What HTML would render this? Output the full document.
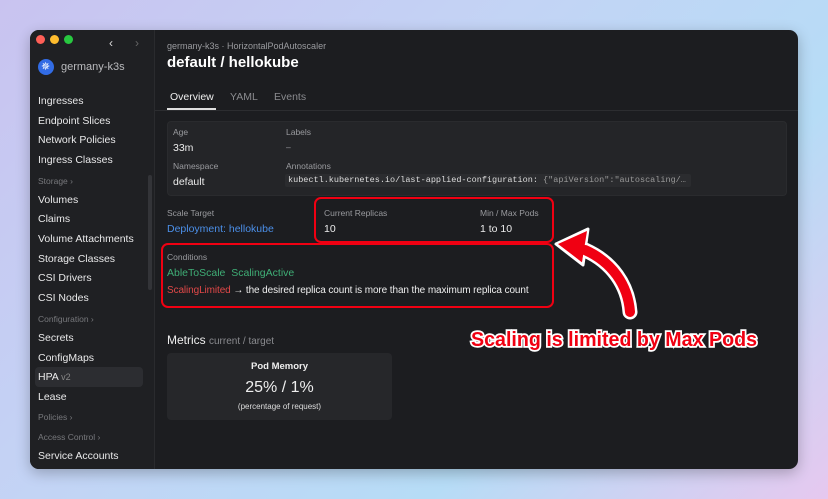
<!DOCTYPE html>
<html><head><meta charset="utf-8"><style>
*{margin:0;padding:0;box-sizing:border-box}
body{width:828px;height:499px;overflow:hidden;font-family:"Liberation Sans",sans-serif;position:relative;
background:linear-gradient(135deg,#c9c3f0 0%,#c3d4f5 40%,#b6dcf6 70%,#e6c8ef 100%);}
.win{position:absolute;left:30px;top:30px;width:768px;height:439px;background:#1c1d20;border-radius:9px;overflow:hidden;box-shadow:0 4px 14px rgba(0,0,0,.25)}
.side{position:absolute;left:0;top:0;width:125px;height:100%;background:#1f2023;border-right:1px solid #2a2b2e}
.dot{position:absolute;top:5px;width:9px;height:9px;border-radius:50%}
.si{position:absolute;left:8px;font-size:10.5px;color:#e9e9ea}
.sh{position:absolute;left:8px;font-size:8.5px;color:#77787c}
.t{position:absolute;white-space:nowrap}
.lab{font-size:8.5px;color:#9a9b9f}
.val{font-size:10.5px;color:#ececec}
.red{position:absolute;border:2.5px solid #f00012;border-radius:7px}
</style></head><body>
<div class="win">
 <div class="side">
  <div class="dot" style="left:6px;background:#fe5f57"></div>
  <div class="dot" style="left:20px;background:#febc2e"></div>
  <div class="dot" style="left:34px;background:#28c840"></div>
  <div class="t" style="left:79px;top:6px;color:#ddd;font-size:12px">‹</div>
  <div class="t" style="left:105px;top:6px;color:#666;font-size:12px">›</div>
  <div style="position:absolute;left:8px;top:29px;width:16px;height:16px;border-radius:50%;background:#326ce5"></div>
  <div class="t" style="left:11px;top:30px;color:#fff;font-size:11px">✵</div>
  <div class="t" style="left:31px;top:31px;color:#b9babd;font-size:11px">germany-k3s</div>
  <div class="si" style="top:65px">Ingresses</div>
  <div class="si" style="top:85px">Endpoint Slices</div>
  <div class="si" style="top:104px">Network Policies</div>
  <div class="si" style="top:124px">Ingress Classes</div>
  <div class="sh" style="top:146px">Storage ›</div>
  <div class="si" style="top:164px">Volumes</div>
  <div class="si" style="top:183px">Claims</div>
  <div class="si" style="top:203px">Volume Attachments</div>
  <div class="si" style="top:223px">Storage Classes</div>
  <div class="si" style="top:242px">CSI Drivers</div>
  <div class="si" style="top:262px">CSI Nodes</div>
  <div class="sh" style="top:284px">Configuration ›</div>
  <div class="si" style="top:302px">Secrets</div>
  <div class="si" style="top:322px">ConfigMaps</div>
  <div style="position:absolute;left:5px;top:337px;width:108px;height:20px;background:#2c2d31;border-radius:4px"></div>
  <div class="si" style="top:341px">HPA <span style="color:#888;font-size:9px">v2</span></div>
  <div class="si" style="top:361px">Lease</div>
  <div class="sh" style="top:382px">Policies ›</div>
  <div class="sh" style="top:402px">Access Control ›</div>
  <div class="si" style="top:420px">Service Accounts</div>
  <div style="position:absolute;left:118px;top:145px;width:4px;height:115px;background:#333438;border-radius:2px"></div>
 </div>
 <div class="t" style="left:137px;top:11px;font-size:9px;color:#9a9b9f">germany-k3s · HorizontalPodAutoscaler</div>
 <div class="t" style="left:137px;top:24px;font-size:15px;font-weight:bold;color:#fff">default / hellokube</div>
 <div class="t" style="left:140px;top:61px;font-size:10.5px;color:#eee">Overview</div>
 <div class="t" style="left:200px;top:61px;font-size:10.5px;color:#8a8b8f">YAML</div>
 <div class="t" style="left:244px;top:61px;font-size:10.5px;color:#8a8b8f">Events</div>
 <div style="position:absolute;left:137px;top:78px;width:49px;height:2px;background:#e0e0e0"></div>
 <div style="position:absolute;left:125px;top:80px;width:643px;height:1px;background:#2c2d30"></div>
 <div style="position:absolute;left:137px;top:91px;width:620px;height:75px;background:#242528;border-radius:4px;border:1px solid #2a2b2e"></div>
 <div class="t lab" style="left:143px;top:97px">Age</div>
 <div class="t val" style="left:143px;top:112px">33m</div>
 <div class="t lab" style="left:256px;top:97px">Labels</div>
 <div class="t lab" style="left:256px;top:112px">–</div>
 <div class="t lab" style="left:143px;top:131px">Namespace</div>
 <div class="t val" style="left:143px;top:146px">default</div>
 <div class="t lab" style="left:256px;top:131px">Annotations</div>
 <div style="position:absolute;left:255px;top:144px;width:406px;height:13px;background:#2b2c2f;border-radius:2px"></div>
 <div class="t" style="left:258px;top:145px;font-family:'Liberation Mono',monospace;font-size:8.5px;color:#ddd">kubectl.kubernetes.io/last-applied-configuration: <span style="color:#999">{"apiVersion":"autoscaling/…</span></div>
 <div class="t lab" style="left:137px;top:178px">Scale Target</div>
 <div class="t val" style="left:137px;top:193px;color:#4b8fe8">Deployment: hellokube</div>
 <div class="t lab" style="left:294px;top:178px">Current Replicas</div>
 <div class="t val" style="left:294px;top:193px">10</div>
 <div class="t lab" style="left:450px;top:178px">Min / Max Pods</div>
 <div class="t val" style="left:450px;top:193px">1 to 10</div>
 <div class="t lab" style="left:137px;top:222px">Conditions</div>
 <div class="t val" style="left:137px;top:237px;color:#3fae76">AbleToScale&nbsp;&nbsp;ScalingActive</div>
 <div class="t val" style="left:137px;top:255px;color:#e04848;font-size:10px;letter-spacing:-0.1px">ScalingLimited <span style="color:#eee">→ the desired replica count is more than the maximum replica count</span></div>
 <div class="t" style="left:137px;top:303px;font-size:12px;color:#eee">Metrics <span style="font-size:10px;color:#8a8b8f">current / target</span></div>
 <div style="position:absolute;left:137px;top:323px;width:225px;height:67px;background:#26272a;border-radius:4px"></div>
 <div class="t" style="left:137px;top:331px;width:225px;text-align:center;font-size:9.5px;font-weight:bold;color:#eee">Pod Memory</div>
 <div class="t" style="left:137px;top:349px;width:225px;text-align:center;font-size:16px;color:#eee">25% / 1%</div>
 <div class="t" style="left:137px;top:372px;width:225px;text-align:center;font-size:8px;color:#ddd">(percentage of request)</div>
</div>
<div class="red" style="left:314px;top:197px;width:240px;height:46px"></div>
<div class="red" style="left:161px;top:243px;width:393px;height:65px"></div>
<svg style="position:absolute;left:0;top:0" width="828" height="499">
 <path d="M630 312 C628 285 612 262 585 250" fill="none" stroke="#fff" stroke-width="15" stroke-linecap="round"/>
 <path d="M556 244 L588 229 L583 265 Z" fill="#f00012" stroke="#fff" stroke-width="3" stroke-linejoin="round"/>
 <path d="M630 312 C628 285 612 262 585 250" fill="none" stroke="#f00012" stroke-width="10" stroke-linecap="round"/>
 <path d="M558 244 L587 231 L582 262 Z" fill="#f00012"/>
 <text x="614" y="346" text-anchor="middle" font-family="Liberation Sans,sans-serif" font-weight="bold" font-size="20" fill="#f00012" stroke="#fff" stroke-width="3.5" paint-order="stroke" textLength="286" lengthAdjust="spacingAndGlyphs">Scaling is limited by Max Pods</text>
</svg>
</body></html>
